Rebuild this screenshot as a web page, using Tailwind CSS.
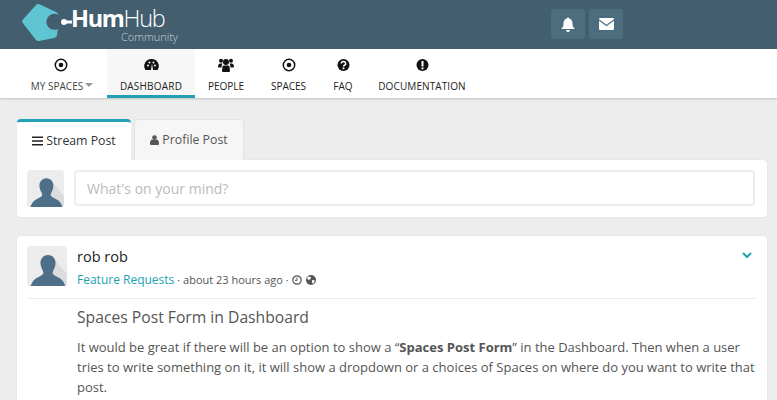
<!DOCTYPE html>
<html><head><meta charset="utf-8">
<script src="https://cdn.jsdelivr.net/npm/@tailwindcss/browser@4"></script>
</head>
<body class="m-0 h-[400px] w-[777px] overflow-hidden bg-[#ededed] font-['Open_Sans',sans-serif] text-[#555]">
<header class="relative flex h-[49px] bg-[#435f6f]">
  <div class="relative ml-[22px] h-[49px] w-[170px]">
    <svg class="absolute left-0 top-[3px]" width="52" height="40" viewBox="0 0 52 40">
      <path d="M14.500 1.500 Q16 0.500 18 1.500 L34 9 Q36 10 36.500 12 A8 8 0 1 0 36 26 L35 32 Q34.800 34.500 32 35 L17 38 Q15 38.300 14 37 L0.800 20 Q-0.300 18 1 16.500 Z" fill="#5fc5d3"/>
      <circle cx="42" cy="19" r="3" fill="#fff"/>
      <rect x="42" y="17.500" width="8" height="3" fill="#fff"/>
    </svg>
    <span class="absolute left-[49px] top-[5px] text-[23.500px] leading-[26px] tracking-[-1.300px] text-white"><b class="font-bold">Hum</b><span class="font-light">Hub</span></span>
    <span class="absolute left-[99px] top-[31px] text-[11px] leading-[12px] font-light text-[#c5d0d6]">Community</span>
  </div>
  <div class="ml-[359px] mt-[9px] flex gap-[4px]">
    <div class="flex h-[30px] w-[34px] items-center justify-center rounded-[3px] bg-[#4d6d7f]">
      <svg width="14" height="15" viewBox="0 0 14 15"><path d="M7 0.500 a1 1 0 0 1 1 1 C11 2.200 11.500 5 11.500 7 C11.500 10 13 11 14 12 L0 12 C1 11 2.500 10 2.500 7 C2.500 5 3 2.200 6 1.500 a1 1 0 0 1 1 -1 Z M5 13 h4 a2 2 0 0 1 -4 0 Z" fill="#fff"/></svg>
    </div>
    <div class="flex h-[30px] w-[34px] items-center justify-center rounded-[3px] bg-[#4d6d7f]">
      <svg width="15" height="12" viewBox="0 0 15 12"><path d="M1 0 H14 Q15 0 15 1.300 L7.500 6.800 L0 1.300 Q0 0 1 0 Z M0 2.800 L7.500 8.300 L15 2.800 V11 Q15 12 14 12 H1 Q0 12 0 11 Z" fill="#fff"/></svg>
    </div>
  </div>
</header>
<nav class="relative flex h-[49px] bg-white pl-[17px] text-[10px] text-[#222] shadow-[0_1px_2px_rgba(0,0,0,0.2)]">
  <div class="flex w-[90px] flex-col items-center border-b-[3px] border-transparent">
    <svg class="mt-[9px] mr-[2px]" width="14" height="14" viewBox="0 0 14 14"><circle cx="7" cy="7" r="5.700" fill="none" stroke="#111" stroke-width="1.500"/><circle cx="7" cy="7" r="2.300" fill="#111"/></svg>
    <span class="mt-[7px] flex items-center leading-[14px] text-[#444]">MY SPACES<span class="ml-[2px] mb-[2px] h-0 w-0 border-x-[4px] border-t-[4px] border-x-transparent border-t-[#999]"></span></span>
  </div>
  <div class="flex w-[88px] flex-col items-center border-b-[3px] border-[#21a1b3] bg-[#f7f7f7]">
    <svg class="mt-[9px]" width="15" height="14" viewBox="0 0 15 14"><path d="M7.500 1 A7 7 0 0 0 1.500 12 L13.500 12 A7 7 0 0 0 7.500 1 Z" fill="#111"/><circle cx="4" cy="7.500" r="1" fill="#f7f7f7"/><circle cx="5.500" cy="4.500" r="1" fill="#f7f7f7"/><circle cx="9.500" cy="4.500" r="1" fill="#f7f7f7"/><circle cx="11" cy="7.500" r="1" fill="#f7f7f7"/><path d="M7 12 L8 5.500 L9 12 Z" fill="#f7f7f7"/></svg>
    <span class="mt-[7px] leading-[14px] tracking-[0.2px]">DASHBOARD</span>
  </div>
  <div class="flex w-[62px] flex-col items-center">
    <svg class="mt-[9px]" width="16" height="14" viewBox="0 0 16 14"><circle cx="3" cy="2.800" r="2" fill="#111"/><circle cx="13" cy="2.800" r="2" fill="#111"/><circle cx="8" cy="4" r="3" fill="#111"/><path d="M0 9 Q0 5.500 2.500 5.500 L4.500 5.500 Q3.500 7 3.500 9.500 L0.500 9.500 Z M16 9 Q16 5.500 13.500 5.500 L11.500 5.500 Q12.500 7 12.500 9.500 L15.500 9.500 Z M4.500 8.500 Q5 7 6.500 7.500 L9.500 7.500 Q11 7 11.500 8.500 L12 13 Q12 14 11 14 L5 14 Q4 14 4 13 Z" fill="#111"/></svg>
    <span class="mt-[7px] leading-[14px]">PEOPLE</span>
  </div>
  <div class="flex w-[63px] flex-col items-center">
    <svg class="mt-[9px]" width="14" height="14" viewBox="0 0 14 14"><circle cx="7" cy="7" r="5.700" fill="none" stroke="#111" stroke-width="1.500"/><circle cx="7" cy="7" r="2.300" fill="#111"/></svg>
    <span class="mt-[7px] leading-[14px]">SPACES</span>
  </div>
  <div class="flex w-[46px] flex-col items-center">
    <svg class="mt-[9px]" width="13" height="14" viewBox="0 0 13 13"><circle cx="6.500" cy="6.500" r="6" fill="#111"/><path d="M4.300 5 A2.200 2 0 1 1 7.500 6.800 Q6.500 7.200 6.500 8" fill="none" stroke="#fff" stroke-width="1.500"/><rect x="5.600" y="9" width="1.800" height="1.700" fill="#fff"/></svg>
    <span class="mt-[7px] leading-[14px]">FAQ</span>
  </div>
  <div class="ml-[12px] flex w-[88px] flex-col items-center">
    <svg class="mt-[9px]" width="13" height="14" viewBox="0 0 13 13"><circle cx="6.500" cy="6.500" r="6" fill="#111"/><rect x="5.500" y="2.500" width="2" height="5.500" fill="#fff"/><rect x="5.500" y="9" width="2" height="1.800" fill="#fff"/></svg>
    <span class="mt-[7px] leading-[14px] tracking-[0.1px]">DOCUMENTATION</span>
  </div>
</nav>
<main class="pl-[17px] pr-[10px] pt-[21px]">
  <div class="flex h-[41px] items-stretch gap-[3px]">
    <div class="flex w-[114px] items-center justify-center gap-[3px] rounded-t-[4px] border-t-[3px] border-[#21a1b3] bg-white text-[12.300px] text-[#333]">
      <svg width="11" height="10" viewBox="0 0 11 10"><path d="M0 0.500 H11 V2 H0 Z M0 4.200 H11 V5.700 H0 Z M0 8 H11 V9.500 H0 Z" fill="#222"/></svg>
      <span>Stream Post</span>
    </div>
    <div class="flex w-[110px] items-center justify-center gap-[3px] rounded-t-[4px] border border-b-0 border-[#e4e4e4] bg-[#f6f6f6] text-[12.300px] text-[#555]">
      <svg width="9" height="10" viewBox="0 0 9 10"><circle cx="4.500" cy="2.500" r="2.300" fill="#555"/><path d="M0 8.500 Q0 4.800 2.500 4.500 L6.500 4.500 Q9 4.800 9 8.500 Q9 10 8 10 H1 Q0 10 0 8.500 Z" fill="#555"/></svg>
      <span>Profile Post</span>
    </div>
  </div>
  <section class="flex h-[57px] gap-[10px] rounded-b-[4px] rounded-tr-[4px] bg-white pl-[10px] pr-[12px] pt-[10px] shadow-[0_0_2px_rgba(0,0,0,0.08)]">
    <svg class="rounded-[3px]" width="37" height="37" viewBox="0 0 40 40"><rect width="40" height="40" fill="#ececec"/><path d="M26 12 L40 28 V40 H30 L20 28 Z" fill="#dcdcdc"/><path d="M21 9 C26 9 29 13 28.500 18 C28 22 26 24 25.500 27 C26 30 33 31 36 35 L38.500 40 H3.500 L6 35 C9 31 16 30 16.500 27 C16 24 14 22 13.500 18 C13 13 16 9 21 9 Z" fill="#4e6f88"/></svg>
    <div class="flex h-[36px] w-[681px] items-center rounded-[4px] border-2 border-[#ededed] bg-white px-[11px] text-[14px] text-[#bbb]">What's on your mind?</div>
  </section>
  <article class="mt-[19px] h-[200px] rounded-[4px] bg-white px-[10px] pt-[10px] shadow-[0_0_2px_rgba(0,0,0,0.08)]">
    <div class="flex h-[53px] gap-[10px] border-b border-[#eee]">
      <svg class="rounded-[3px]" width="40" height="40" viewBox="0 0 40 40"><rect width="40" height="40" fill="#ececec"/><path d="M26 12 L40 28 V40 H30 L20 28 Z" fill="#dcdcdc"/><path d="M21 9 C26 9 29 13 28.500 18 C28 22 26 24 25.500 27 C26 30 33 31 36 35 L38.500 40 H3.500 L6 35 C9 31 16 30 16.500 27 C16 24 14 22 13.500 18 C13 13 16 9 21 9 Z" fill="#4e6f88"/></svg>
      <div class="flex-1">
        <div class="mt-[1px] text-[14.500px] leading-[20px] text-[#222]">rob rob</div>
        <div class="mt-[3px] flex items-center text-[11px] leading-[20px] text-[#555]">
          <span class="text-[12px] text-[#21a1b3]">Feature Requests</span>
          <span class="ml-[3px]">· about 23 hours ago ·</span>
          <svg class="ml-[3px]" width="10" height="10" viewBox="0 0 10 10"><circle cx="5" cy="5" r="4.200" fill="none" stroke="#555" stroke-width="1.200"/><path d="M5 2.500 V5.400 H3" fill="none" stroke="#555"/></svg>
          <svg class="ml-[4px]" width="10" height="10" viewBox="0 0 10 10"><circle cx="5" cy="5" r="5" fill="#555"/><path d="M2 1.500 L5 2 L4.500 4 L2.500 5 L1 3.500 Z M6 5 L9 5.500 L7.500 8.500 L6 8 Z" fill="#fff"/></svg>
        </div>
      </div>
      <svg class="mr-[5px] mt-[6px]" width="10" height="7" viewBox="0 0 10 7"><path d="M1 1 L5 5 L9 1" fill="none" stroke="#21a1b3" stroke-width="2"/></svg>
    </div>
    <div class="pl-[50px]">
      <div class="mt-[7px] text-[15.700px] leading-[22px] text-[#555]">Spaces Post Form in Dashboard</div>
      <p class="mt-[9px] text-[13px] leading-[20px] text-[#555]">It would be great if there will be an option to show a “<b>Spaces Post Form</b>” in the Dashboard. Then when a user tries to write something on it, it will show a dropdown or a choices of Spaces on where do you want to write that post.</p>
    </div>
  </article>
</main>
</body></html>
